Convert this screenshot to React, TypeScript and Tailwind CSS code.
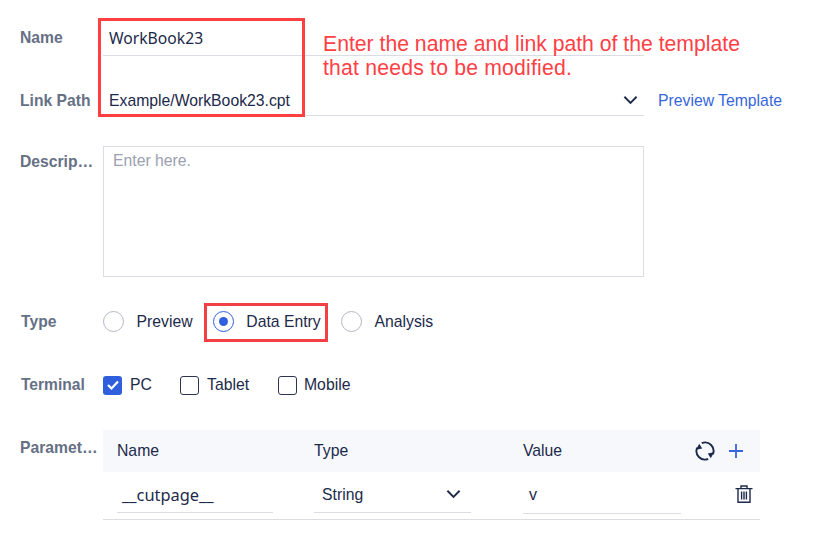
const Chevron = ({ className }: { className: string }) => (
  <svg viewBox="0 0 16 10" className={className} fill="none" stroke="currentColor" strokeWidth="2">
    <path d="M1.5 1.5 8 8l6.5-6.5" />
  </svg>
);

const Radio = ({ label, checked }: { label: string; checked?: boolean }) => (
  <div className="flex items-center gap-[12.5px]">
    {checked ? (
      <span className="w-[21px] h-[21px] rounded-full border border-[#2f5fdc] flex items-center justify-center">
        <span className="w-[9px] h-[9px] rounded-full bg-[#2f5fdc]" />
      </span>
    ) : (
      <span className="w-[21px] h-[21px] rounded-full border border-[#b4b8c6]" />
    )}
    <span className="pt-[1px]">{label}</span>
  </div>
);

const Check = ({ label, checked, width, gap }: { label: string; checked?: boolean; width: string; gap: string }) => (
  <div className={`flex items-center ${gap} ${width}`}>
    {checked ? (
      <span className="w-[19px] h-[19px] rounded-[3px] bg-[#2f5fdc] flex items-center justify-center">
        <svg viewBox="0 0 14 14" className="w-[14px] h-[14px]" fill="none" stroke="white" strokeWidth="2.2">
          <path d="M2 7l3.5 3.5L12 3.5" />
        </svg>
      </span>
    ) : (
      <span className="w-[19px] h-[19px] rounded-[3px] border border-[#2b3550]" />
    )}
    <span>{label}</span>
  </div>
);

const App = () => {
  return (
    <div
      className="relative w-[817px] h-[560px] overflow-hidden bg-white text-[15.75px] text-[#1c2a4a]"
      style={{ fontFamily: '"Liberation Sans", Arial, sans-serif' }}
    >
      <div className="pl-[20px] pt-[15px] flex flex-col">
        <div className="flex h-[41px]">
          <div className="w-[83px] pt-[14px] leading-[18px] font-bold text-[#667085] text-[15.7px]">Name</div>
          <div
            className="w-[541px] border-b border-[#dcdde4] pl-[6px] pt-[11px] leading-[24px] text-[15.7px]"
            style={{ fontFamily: '"Noto Sans", sans-serif' }}
          >
            WorkBook23
          </div>
        </div>

        <div className="flex h-[41px] mt-[19px]">
          <div className="w-[83px] pt-[17px] leading-[18px] font-bold text-[#667085] text-[15.7px]">Link Path</div>
          <div className="w-[541px] border-b border-[#dcdde4] pl-[6px] pr-[6px] pt-[14px] leading-[24px] flex justify-between">
            <span>Example/WorkBook23.cpt</span>
            <Chevron className="w-[15px] h-[10px] mt-[6px] text-[#1c2a4a]" />
          </div>
          <div className="ml-[14px] pt-[14px] leading-[24px] text-[#3766dc]">Preview Template</div>
        </div>

        <div className="flex mt-[30px]">
          <div className="w-[83px] pt-[7px] leading-[18px] font-bold text-[#667085] text-[15.7px]">Descrip…</div>
          <div className="w-[541px] h-[131px] border border-[#dcdde4] pl-[9px] pt-[3px] leading-[22px] text-[#9aa0b0]">
            Enter here.
          </div>
        </div>

        <div className="flex items-center h-[24px] mt-[32px]">
          <div className="w-[83px] pl-[1px] font-bold text-[#667085] text-[15.7px] pt-[1px]">Type</div>
          <div className="flex items-center gap-[20.3px] leading-[24px]">
            <Radio label="Preview" />
            <Radio label="Data Entry" checked />
            <Radio label="Analysis" />
          </div>
        </div>

        <div className="flex items-center h-[24px] mt-[40px]">
          <div className="w-[83px] pl-[1px] font-bold text-[#667085] text-[15.6px]">Terminal</div>
          <Check label="PC" checked width="w-[77px]" gap="gap-[8px]" />
          <Check label="Tablet" width="w-[98px]" gap="gap-[8px]" />
          <Check label="Mobile" width="w-[90px]" gap="gap-[7px]" />
        </div>

        <div className="flex mt-[33px]">
          <div className="w-[83px] pt-[9px] leading-[18px] font-bold text-[#667085] text-[15.7px]">Paramet…</div>
          <div className="w-[657px]">
            <div className="h-[42px] bg-[#f6f8fc] flex items-center pl-[14px]">
              <span className="w-[197px]">Name</span>
              <span className="w-[209px]">Type</span>
              <span className="w-[172px]">Value</span>
              <svg viewBox="0 0 20 20" className="w-[20px] h-[20px]" fill="none" stroke="#1c2a4a" strokeWidth="1.9">
                <path d="M6.8 2.1A8.5 8.5 0 0 1 17.8 13.4" />
                <path d="M13.2 17.9A8.5 8.5 0 0 1 2.2 6.6" />
                <path d="M19 11.2l-3.2 6-3-4.6z" fill="#1c2a4a" stroke="none" />
                <path d="M1 8.8l3.2-6 3 4.6z" fill="#1c2a4a" stroke="none" />
              </svg>
              <svg viewBox="0 0 16 16" className="w-[16px] h-[16px] ml-[13px]" fill="none" stroke="#3766dc" strokeWidth="1.8">
                <path d="M8 1v14M1 8h14" />
              </svg>
            </div>
            <div className="h-[48px] border-b border-[#dcdde0] flex items-start pl-[14px] pt-[9px]">
              <div
                className="w-[156px] h-[32px] border-b border-[#dcdde4] pl-[5px] leading-[28px] text-[16.4px]"
                style={{ fontFamily: '"Noto Sans", sans-serif' }}
              >
                __cutpage__
              </div>
              <div className="w-[157px] h-[32px] ml-[41px] border-b border-[#dcdde4] pl-[8px] pr-[10px] leading-[28px] flex justify-between">
                <span>String</span>
                <Chevron className="w-[15px] h-[10px] mt-[8px] text-[#1c2a4a]" />
              </div>
              <div
                className="w-[158px] h-[33px] ml-[52px] border-b border-[#dcdde4] pl-[6px] leading-[26px]"
                style={{ fontFamily: '"Noto Sans", sans-serif' }}
              >
                v
              </div>
              <svg viewBox="0 0 18 18" className="w-[18px] h-[18px] ml-[54px] mt-[4px]" fill="none" stroke="#1c2a4a" strokeWidth="1.4">
                <path d="M0.5 3.6h17M6 3.4V1h6v2.4M3 3.6v13.6h12V3.6M6.6 6.5v8M9 6.5v8M11.4 6.5v8" />
              </svg>
            </div>
          </div>
        </div>
      </div>

      {/* red annotations drawn over the form */}
      <div className="absolute left-[98px] top-[18px] w-[207px] h-[99px] border-[3px] border-[#ff4040]" />
      <div className="absolute left-[204px] top-[303px] w-[124px] h-[39px] border-[3px] border-[#f24045]" />
      <div className="absolute left-[323px] top-[32px] text-[21.2px] leading-[24px] text-[#ff4045] whitespace-nowrap">
        Enter the name and link path of the template
        <br />
        <span className="tracking-[0.2px]">that needs to be modified.</span>
      </div>
    </div>
  );
};

export default App;
